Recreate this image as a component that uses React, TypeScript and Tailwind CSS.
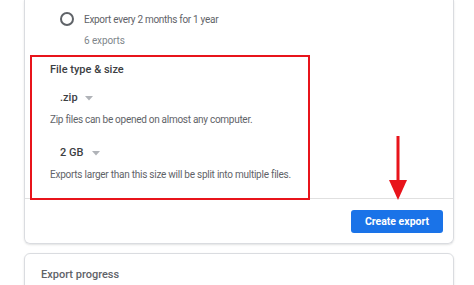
import React from "react";

function Caret({ className = "" }: { className?: string }) {
  return (
    <svg width="8" height="5" viewBox="0 0 8 5" className={className}>
      <path d="M0 0 L8 0 L4 4.5 Z" fill="#b0b3b8" />
    </svg>
  );
}

export default function App() {
  return (
    <div
      className="relative w-[474px] h-[285px] overflow-hidden bg-white"
      style={{ fontFamily: "Roboto, 'Liberation Sans', sans-serif" }}
    >
      <div className="ml-[24px] w-[430px] border border-t-0 border-[#dadce0] rounded-b-[6px] shadow-[0_1px_2px_rgba(60,64,67,0.15)]">
        <div className="pl-[35px] pt-[11px]">
          <div className="flex items-center h-[16px]">
            <span className="w-[14px] h-[14px] rounded-full border-2 border-[#5f6368]" />
            <span className="ml-[10px] text-[10px] tracking-[-0.3px] text-[#5f6368]">Export every 2 months for 1 year</span>
          </div>
          <div className="ml-[24px] mt-[7px] text-[10px] tracking-[-0.1px] text-[#80868b] leading-[14px]">6 exports</div>
        </div>
        <div className="pl-[25px] pt-[15px] h-[150px]">
          <div className="text-[11px] font-medium text-[#3c4043] leading-[14px]">File type &amp; size</div>
          <div className="mt-[14px] ml-[10px] flex items-center h-[14px]">
            <span className="text-[11px] font-medium text-[#3c4043]">.zip</span>
            <Caret className="ml-[7px]" />
          </div>
          <div className="mt-[8px] text-[10px] tracking-[-0.28px] text-[#5f6368] leading-[14px]">Zip files can be opened on almost any computer.</div>
          <div className="mt-[19px] ml-[10px] flex items-center h-[14px]">
            <span className="text-[11px] font-medium text-[#3c4043]">2 GB</span>
            <Caret className="ml-[9px]" />
          </div>
          <div className="mt-[8px] text-[10px] tracking-[-0.25px] text-[#5f6368] leading-[14px]">Exports larger than this size will be split into multiple files.</div>
        </div>
        <div className="border-t border-[#e0e0e0] flex justify-end pt-[11px] pb-[10px] pr-[10px]">
          <button className="w-[92px] h-[23px] rounded-[3px] bg-[#1a73e8] text-white text-[10.5px] font-bold">
            Create export
          </button>
        </div>
      </div>
      <div className="ml-[24px] mt-[9px] w-[430px] h-[60px] border border-[#dadce0] rounded-[6px] shadow-[0_1px_2px_rgba(60,64,67,0.15)] pl-[16px] pt-[13px]">
        <div className="text-[11px] font-medium text-[#5f6368]">Export progress</div>
      </div>

      {/* annotations */}
      <div className="absolute left-[30px] top-[55px] w-[280px] h-[145px] border-2 border-[#e8141b]" />
      <svg className="absolute left-[388px] top-[136px]" width="20" height="66" viewBox="0 0 20 66">
        <rect x="8.5" y="0" width="3" height="46" fill="#e8141b" />
        <path d="M1 44 L19 44 L10 64 Z" fill="#e8141b" />
      </svg>
    </div>
  );
}
